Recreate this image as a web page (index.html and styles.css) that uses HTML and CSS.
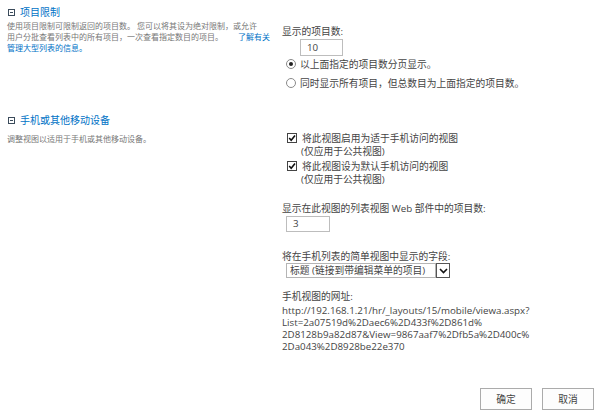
FILE: index.html
```html
<!DOCTYPE html>
<html lang="zh-CN">
<head>
<meta charset="utf-8">
<title>视图设置</title>
<link rel="stylesheet" href="styles.css">
</head>
<body>
<div class="page">
  <section class="sec sec1">
    <div class="left">
      <h2 class="hdr"><svg class="tog" viewBox="0 0 7 7" width="7" height="7"><rect x="0.5" y="0.5" width="6" height="6" fill="none" stroke="#3b4b5b" stroke-width="1"/><line x1="2" y1="3.5" x2="5" y2="3.5" stroke="#3b4b5b" stroke-width="1"/></svg>项目限制</h2>
      <p class="desc">使用项目限制可限制返回的项目数。 您可以将其设为绝对限制，或允许<br>用户分批查看列表中的所有项目，一次查看指定数目的项目。<a class="lnk">了解有关<br>管理大型列表的信息。</a></p>
    </div>
    <div class="right r1">
      <div class="lbl">显示的项目数:</div>
      <div class="tbox tb1">10</div>
      <div class="opt"><span class="radio on"></span>以上面指定的项目数分页显示。</div>
      <div class="opt opt2"><span class="radio"></span>同时显示所有项目，但总数目为上面指定的项目数。</div>
    </div>
  </section>

  <section class="sec sec2">
    <div class="left">
      <h2 class="hdr"><svg class="tog" viewBox="0 0 7 7" width="7" height="7"><rect x="0.5" y="0.5" width="6" height="6" fill="none" stroke="#3b4b5b" stroke-width="1"/><line x1="2" y1="3.5" x2="5" y2="3.5" stroke="#3b4b5b" stroke-width="1"/></svg>手机或其他移动设备</h2>
      <p class="desc d2">调整视图以适用于手机或其他移动设备。</p>
    </div>
    <div class="right r2">
      <div class="cbrow"><span class="cb"><svg viewBox="0 0 10 10" width="10" height="10"><rect x="0.5" y="0.5" width="9" height="9" fill="#fff" stroke="#444"/><polyline points="2.2,5 4.2,7.2 8,2.6" fill="none" stroke="#111" stroke-width="1.6"/></svg></span>将此视图启用为适于手机访问的视图</div>
      <div class="sub">(仅应用于公共视图)</div>
      <div class="cbrow"><span class="cb"><svg viewBox="0 0 10 10" width="10" height="10"><rect x="0.5" y="0.5" width="9" height="9" fill="#fff" stroke="#444"/><polyline points="2.2,5 4.2,7.2 8,2.6" fill="none" stroke="#111" stroke-width="1.6"/></svg></span>将此视图设为默认手机访问的视图</div>
      <div class="sub">(仅应用于公共视图)</div>
      <div class="lbl lbl2">显示在此视图的列表视图 Web 部件中的项目数:</div>
      <div class="tbox tb2">3</div>
      <div class="lbl lbl3">将在手机列表的简单视图中显示的字段:</div>
      <div class="sel">
        <span class="sel-text">标题 (链接到带编辑菜单的项目)</span>
        <span class="sel-btn"><svg viewBox="0 0 9 6" width="9" height="6"><polyline points="1,1 4.5,4.5 8,1" fill="none" stroke="#111" stroke-width="1.6"/></svg></span>
      </div>
      <div class="lbl lbl4">手机视图的网址:</div>
      <div class="url">http://192.168.1.21/hr/_layouts/15/mobile/viewa.aspx?<br>List=2a07519d%2Daec6%2D433f%2D861d%<br>2D8128b9a82d87&amp;View=9867aaf7%2Dfb5a%2D400c%<br>2Da043%2D8928be22e370</div>
    </div>
  </section>

  <div class="footer">
    <button class="btn" type="button">确定</button>
    <button class="btn" type="button">取消</button>
  </div>
</div>
</body>
</html>
```

FILE: styles.css
```css
html, body {
  margin: 0;
  padding: 0;
  background: #ffffff;
}

body {
  font-family: "Open Sans", "Noto Sans CJK SC", sans-serif;
  font-size: 9.75px;
  color: #444444;
}

.page {
  width: 613px;
  height: 418px;
  overflow: hidden;
}

.sec {
  display: flex;
}

.left {
  flex: none;
  width: 275px;
  padding-left: 7px;
}

.right {
  flex: 1;
}

.hdr {
  margin: 0;
  padding-top: 4px;
  display: flex;
  align-items: center;
  font-size: 10px;
  line-height: 16px;
  font-weight: normal;
  color: #0072c6;
  white-space: nowrap;
}

.tog {
  flex: none;
  width: 7px;
  height: 7px;
  margin-left: 1px;
  margin-right: 5px;
}

.desc {
  margin: 0;
  font-size: 8px;
  line-height: 11px;
  color: #777777;
  white-space: nowrap;
}

.lnk {
  color: #0072c6;
  margin-left: 15px;
}

/* section 1 right column */
.r1 {
  padding-top: 26px;
}

.lbl {
  line-height: 12px;
  white-space: nowrap;
}

.tbox {
  box-sizing: border-box;
  border: 1px solid #bdbdbd;
  background: #fff;
  padding-left: 6px;
  color: #444;
}

.tb1 {
  margin: 1px 0 0 18px;
  width: 43px;
  height: 17px;
  line-height: 15px;
}

.opt {
  display: flex;
  align-items: center;
  height: 14px;
  margin-top: 1px;
  white-space: nowrap;
}

.opt2 {
  margin-top: 5px;
}

.radio {
  flex: none;
  box-sizing: border-box;
  width: 10px;
  height: 10px;
  margin-left: 4px;
  margin-right: 4px;
  border: 1px solid #8a8a8a;
  border-radius: 50%;
  display: flex;
  align-items: center;
  justify-content: center;
  background: #fff;
}

.radio.on::after {
  content: "";
  width: 4px;
  height: 4px;
  border-radius: 50%;
  background: #222;
}

/* section 2 */
.sec2 {
  margin-top: 10px;
}

.sec2 .hdr {
  padding-top: 12px;
}

.d2 {
  margin-top: 5px;
}

.r2 {
  padding-top: 31px;
}

.cbrow {
  display: flex;
  align-items: center;
  height: 14px;
  white-space: nowrap;
}

.cb {
  flex: none;
  display: flex;
  width: 10px;
  height: 10px;
  margin-left: 5px;
  margin-right: 5px;
}

.sub {
  padding-left: 19px;
  line-height: 14px;
  white-space: nowrap;
}

.lbl2 {
  margin-top: 16px;
}

.tb2 {
  margin: 1px 0 0 4px;
  width: 44px;
  height: 16px;
  line-height: 14px;
}

.lbl3 {
  margin-top: 19px;
}

.sel {
  display: flex;
  width: 164px;
  height: 15px;
  margin-left: 4px;
}

.sel-text {
  flex: 1;
  box-sizing: border-box;
  border: 1px solid #b5b5b5;
  padding-left: 3px;
  line-height: 13px;
  white-space: nowrap;
}

.sel-btn {
  flex: none;
  box-sizing: border-box;
  width: 14px;
  border: 1px solid #555;
  display: flex;
  align-items: center;
  justify-content: center;
  background: #fff;
}

.lbl4 {
  margin-top: 13px;
}

.url {
  margin-top: 2px;
  line-height: 12px;
  white-space: nowrap;
}

.footer {
  display: flex;
  justify-content: flex-end;
  gap: 10px;
  padding-right: 19px;
  margin-top: 35px;
}

.btn {
  box-sizing: border-box;
  width: 52px;
  height: 22px;
  border: 1px solid #ababab;
  background: #fdfdfd;
  font-family: "Open Sans", "Noto Sans CJK SC", sans-serif;
  font-size: 9.75px;
  color: #444;
  padding: 0;
}
```
